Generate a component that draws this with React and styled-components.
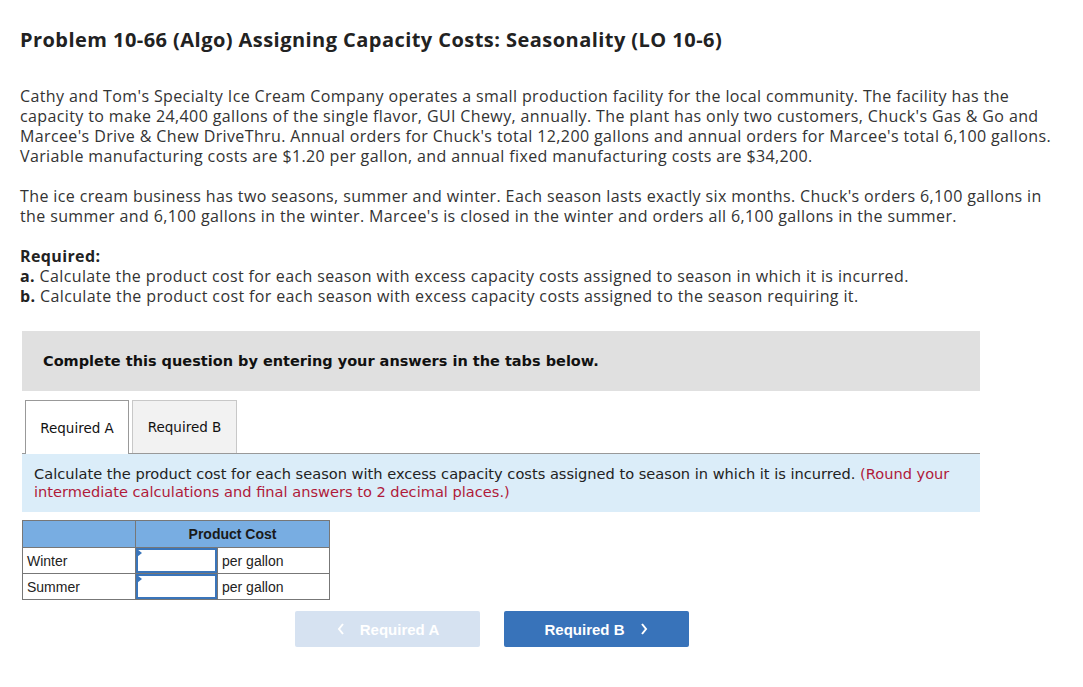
import React from "react";
import styled, { createGlobalStyle } from "styled-components";

const GlobalStyle = createGlobalStyle`
  body {
    margin: 0;
    background: #fff;
    color: #222;
    font-family: "Open Sans", "Liberation Sans", sans-serif;
  }
`;

const App = () => {
  return (
    <Page>
      <GlobalStyle />
      <Title>Problem 10-66 (Algo) Assigning Capacity Costs: Seasonality (LO 10-6)</Title>
      <Para>
        Cathy and Tom's Specialty Ice Cream Company operates a small production facility for the local community. The facility has the
        <br />
        capacity to make 24,400 gallons of the single flavor, GUI Chewy, annually. The plant has only two customers, Chuck's Gas &amp; Go and
        <br />
        Marcee's Drive &amp; Chew DriveThru. Annual orders for Chuck's total 12,200 gallons and annual orders for Marcee's total 6,100 gallons.
        <br />
        Variable manufacturing costs are $1.20 per gallon, and annual fixed manufacturing costs are $34,200.
      </Para>
      <Para>
        The ice cream business has two seasons, summer and winter. Each season lasts exactly six months. Chuck's orders 6,100 gallons in
        <br />
        the summer and 6,100 gallons in the winter. Marcee's is closed in the winter and orders all 6,100 gallons in the summer.
      </Para>
      <Para>
        <strong>Required:</strong>
        <br />
        <strong>a.</strong> Calculate the product cost for each season with excess capacity costs assigned to season in which it is incurred.
        <br />
        <strong>b.</strong> Calculate the product cost for each season with excess capacity costs assigned to the season requiring it.
      </Para>

      <Question>
        <Banner>Complete this question by entering your answers in the tabs below.</Banner>
        <Tabs>
          <Tab $active>Required A</Tab>
          <Tab>Required B</Tab>
        </Tabs>
        <Instruction>
          Calculate the product cost for each season with excess capacity costs assigned to season in which it is incurred.{" "}
          <Hint>(Round your intermediate calculations and final answers to 2 decimal places.)</Hint>
        </Instruction>

        <Table>
          <thead>
            <tr>
              <HeadCell />
              <HeadCell colSpan={2}>Product Cost</HeadCell>
            </tr>
          </thead>
          <tbody>
            {["Winter", "Summer"].map((season) => (
              <tr key={season}>
                <LabelCell>{season}</LabelCell>
                <InputCell>
                  <Marker />
                  <Input type="text" />
                </InputCell>
                <UnitCell>per gallon</UnitCell>
              </tr>
            ))}
          </tbody>
        </Table>

        <Nav>
          <NavButton $disabled>
            <Chevron viewBox="0 0 10 16">
              <path d="M7 3 L3 8 L7 13" />
            </Chevron>
            Required A
          </NavButton>
          <NavButton>
            Required B
            <Chevron viewBox="0 0 10 16">
              <path d="M3 3 L7 8 L3 13" />
            </Chevron>
          </NavButton>
        </Nav>
      </Question>
    </Page>
  );
};

const Page = styled.div`
  padding: 27px 20px 40px 20px;
`;

const Title = styled.h1`
  margin: 0 0 33px;
  font-size: 20px;
  line-height: 26px;
  font-weight: 700;
  color: #222;
  letter-spacing: 0.45px;
`;

const Para = styled.p`
  margin: 0 0 20px;
  font-size: 16px;
  line-height: 20px;
  color: #333;
  white-space: nowrap;
  letter-spacing: 0.38px;

  strong {
    font-weight: 700;
    color: #222;
  }
`;

const Question = styled.div`
  margin-top: 25px;
  padding-left: 2px;
  width: 958px;
`;

const Banner = styled.div`
  background: #e0e0e0;
  height: 60px;
  padding: 0 21px;
  display: flex;
  align-items: center;
  font-family: "DejaVu Sans", Verdana, sans-serif;
  font-weight: 700;
  font-size: 14.5px;
  color: #111;
`;

const Tabs = styled.div`
  display: flex;
  gap: 3px;
  margin-top: 9px;
  padding-left: 3px;
  border-bottom: 1px solid #999;
`;

const Tab = styled.div`
  width: ${(p) => (p.$active ? "104px" : "105px")};
  box-sizing: border-box;
  display: flex;
  align-items: center;
  justify-content: center;
  font-family: "DejaVu Sans", Tahoma, sans-serif;
  font-size: 13.5px;
  color: #111;
  border: 1px solid ${(p) => (p.$active ? "#999" : "#c8c8c8")};
  border-bottom: none;
  background: ${(p) => (p.$active ? "#fff" : "#f2f2f2")};
  margin-bottom: ${(p) => (p.$active ? "-1px" : "0")};
  height: ${(p) => (p.$active ? "54px" : "53px")};
`;

const Instruction = styled.div`
  background: #dbedf9;
  padding: 11px 12px 11px;
  font-family: "DejaVu Sans", Verdana, sans-serif;
  font-size: 14.6px;
  line-height: 18px;
  color: #222;
`;

const Hint = styled.span`
  color: #b01a3a;
`;

const Table = styled.table`
  margin-top: 8px;
  border-collapse: collapse;
  font-family: "Liberation Sans", Arial, sans-serif;
  font-size: 14px;
  color: #222;

  td,
  th {
    border: 1px solid #777;
    padding: 0;
  }
`;

const HeadCell = styled.th`
  background: #78ade2;
  height: 26px;
  font-weight: 700;
  font-size: 14px;
  text-align: center;
  color: #1a1a1a;
`;

const LabelCell = styled.td`
  width: 108px;
  height: 25px;
  padding: 0 0 0 4px !important;
`;

const InputCell = styled.td`
  width: 81px;
  position: relative;
  padding: 0 !important;
`;

const Marker = styled.span`
  position: absolute;
  left: 1px;
  top: 1px;
  width: 0;
  height: 0;
  border-top: 4px solid transparent;
  border-bottom: 4px solid transparent;
  border-left: 5px solid #3a75ba;
`;

const Input = styled.input`
  display: block;
  box-sizing: border-box;
  width: 100%;
  height: 25px;
  margin: 0;
  border: 2px solid #3a75ba;
  background: #fff;
  outline: none;
`;

const UnitCell = styled.td`
  width: 107px;
  padding: 0 0 0 4px !important;
`;

const Nav = styled.div`
  display: flex;
  gap: 24px;
  margin-top: 11px;
  padding-left: 273px;
`;

const NavButton = styled.button`
  width: 185px;
  height: 36px;
  border: none;
  border-radius: 2px;
  display: flex;
  align-items: center;
  justify-content: center;
  gap: 14px;
  font-family: "Liberation Sans", Arial, sans-serif;
  font-weight: 700;
  font-size: 15px;
  color: #fff;
  background: ${(p) => (p.$disabled ? "#d6e2f1" : "#3873ba")};
`;

const Chevron = styled.svg`
  width: 10px;
  height: 16px;
  fill: none;
  stroke: #fff;
  stroke-width: 2;
`;

export default App;
